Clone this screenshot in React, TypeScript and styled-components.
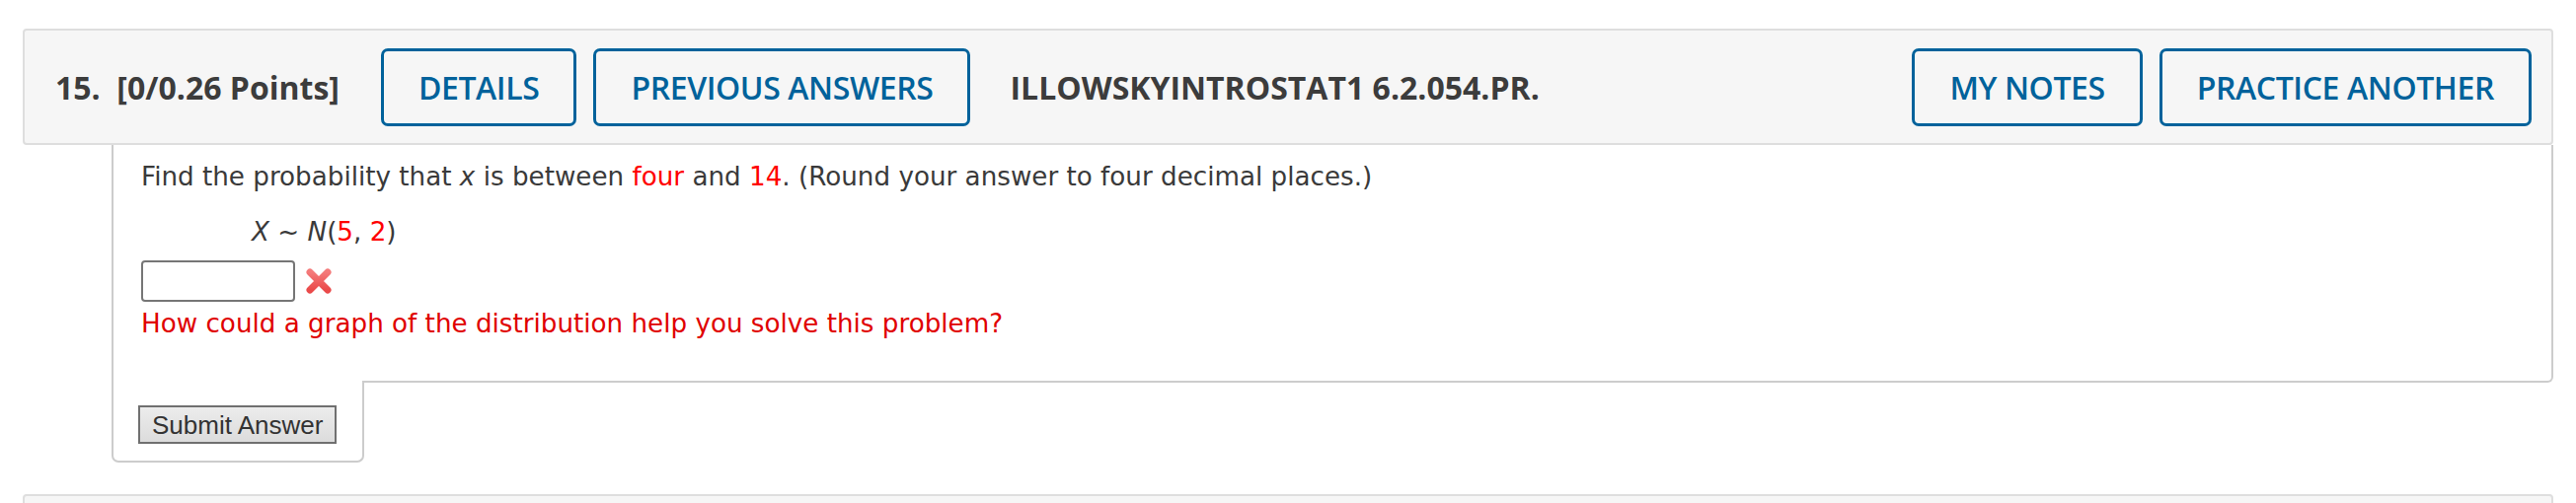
import React from 'react'
import styled, { createGlobalStyle } from 'styled-components'

const GlobalStyle = createGlobalStyle`
  html, body {
    margin: 0;
    padding: 0;
    background: #fff;
  }
  body {
    font-family: "DejaVu Sans", Verdana, sans-serif;
  }
`

const Page = styled.div`
  padding: 29px 23px 0;
`

const Header = styled.div`
  display: flex;
  align-items: center;
  height: 118px;
  box-sizing: border-box;
  padding: 0 20px 0 31px;
  background: #f6f6f6;
  border: 2px solid #dedede;
  border-radius: 4px;
  font-family: "Open Sans", sans-serif;
`

const Title = styled.span<{ gapLeft?: number; gapRight?: number }>`
  font-size: 32px;
  font-weight: 700;
  color: #3c3c3c;
  white-space: pre;
  margin-left: ${({ gapLeft }) => gapLeft || 0}px;
  margin-right: ${({ gapRight }) => gapRight || 0}px;
`

const ButtonGroup = styled.div<{ push?: boolean }>`
  display: flex;
  gap: 17px;
  margin-left: ${({ push }) => (push ? 'auto' : '0')};
`

const HeaderButton = styled.button`
  height: 79px;
  box-sizing: border-box;
  padding: 0 35px;
  background: transparent;
  border: 3px solid #00629b;
  border-radius: 7px;
  color: #00629b;
  font-family: "Open Sans", sans-serif;
  font-size: 32px;
  font-weight: 600;
  letter-spacing: -0.4px;
  cursor: pointer;
`

const Body = styled.div`
  margin-left: 90px;
`

const Question = styled.div`
  padding: 14px 28px 40px;
  border: 2px solid #cccccc;
  border-top: none;
  border-bottom-right-radius: 6px;
  color: #3a3a3a;
  font-size: 26.2px;
  line-height: 36px;
`

const Prompt = styled.p`
  margin: 0;
`

const Red = styled.span`
  color: #ff0000;
`

const Formula = styled.div`
  margin: 20px 0 0 112px;
`

const AnswerRow = styled.div`
  display: flex;
  align-items: center;
  gap: 10px;
  margin-top: 11px;
`

const AnswerInput = styled.input`
  width: 156px;
  height: 42px;
  box-sizing: border-box;
  margin: 0;
  border: 2px solid #767676;
  border-radius: 4px;
  background: #fff;
`

const Hint = styled.div`
  margin-top: 4px;
  color: #e00000;
`

const SubmitTab = styled.div`
  display: inline-block;
  margin-top: -2px;
  padding: 25px 26px 17px 25px;
  background: #fff;
  border: 2px solid #cccccc;
  border-top: none;
  border-radius: 0 0 7px 7px;
`

const SubmitButton = styled.button`
  display: block;
  height: 39px;
  box-sizing: border-box;
  padding: 0 12px;
  border: 2px solid #707070;
  border-radius: 0;
  background: linear-gradient(#ececec, #dcdcdc);
  color: #333;
  font-family: "Liberation Sans", Arial, sans-serif;
  font-size: 26px;
  line-height: 1;
  cursor: pointer;
`

const NextHeader = styled(Header)`
  margin-top: 32px;
`

const WrongMark = () => (
  <svg width="28" height="26" viewBox="0 0 28 26">
    <defs>
      <linearGradient id="wrong" x1="0" y1="0" x2="0" y2="1">
        <stop offset="0" stopColor="#f47a7a" />
        <stop offset="1" stopColor="#ea4a4a" />
      </linearGradient>
    </defs>
    <path
      d="M5 4 L23 22 M23 4 L5 22"
      stroke="url(#wrong)"
      strokeWidth="7"
      strokeLinecap="round"
      fill="none"
    />
  </svg>
)

const App = () => {
  return (
    <>
      <GlobalStyle />
      <Page>
        <Header>
          <Title gapRight={42}>15.  [0/0.26 Points]</Title>
          <ButtonGroup>
            <HeaderButton>DETAILS</HeaderButton>
            <HeaderButton>PREVIOUS ANSWERS</HeaderButton>
          </ButtonGroup>
          <Title gapLeft={40}>ILLOWSKYINTROSTAT1 6.2.054.PR.</Title>
          <ButtonGroup push>
            <HeaderButton>MY NOTES</HeaderButton>
            <HeaderButton>PRACTICE ANOTHER</HeaderButton>
          </ButtonGroup>
        </Header>
        <Body>
          <Question>
            <Prompt>
              Find the probability that <i>x</i> is between <Red>four</Red> and{' '}
              <Red>14</Red>. (Round your answer to four decimal places.)
            </Prompt>
            <Formula>
              <i>X</i> ~ <i>N</i>(<Red>5</Red>, <Red>2</Red>)
            </Formula>
            <AnswerRow>
              <AnswerInput type="text" />
              <WrongMark />
            </AnswerRow>
            <Hint>How could a graph of the distribution help you solve this problem?</Hint>
          </Question>
          <SubmitTab>
            <SubmitButton>Submit Answer</SubmitButton>
          </SubmitTab>
        </Body>
        <NextHeader />
      </Page>
    </>
  )
}

export default App
